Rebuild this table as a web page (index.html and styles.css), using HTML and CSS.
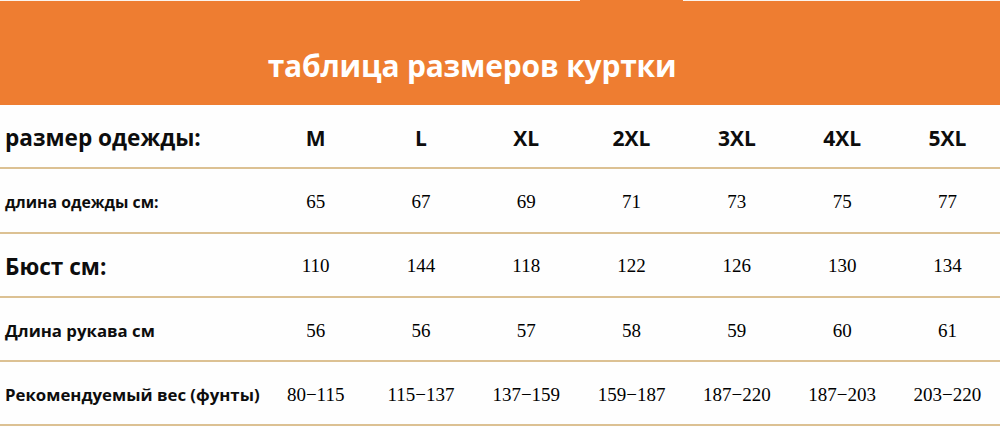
FILE: index.html
```html
<!DOCTYPE html>
<html lang="ru">
<head>
<meta charset="utf-8">
<title>таблица размеров куртки</title>
<link rel="stylesheet" href="styles.css">
</head>
<body>
<div class="page">
  <div class="top-edge"><span class="notch"></span></div>
  <header class="banner">
    <h1 class="title">таблица размеров куртки</h1>
  </header>
  <div class="table">
    <div class="row">
      <div class="label label-lg">размер одежды:</div>
      <div class="cell size">M</div>
      <div class="cell size">L</div>
      <div class="cell size">XL</div>
      <div class="cell size">2XL</div>
      <div class="cell size">3XL</div>
      <div class="cell size">4XL</div>
      <div class="cell size">5XL</div>
    </div>
    <div class="row">
      <div class="label label-sm">длина одежды см:</div>
      <div class="cell num">65</div>
      <div class="cell num">67</div>
      <div class="cell num">69</div>
      <div class="cell num">71</div>
      <div class="cell num">73</div>
      <div class="cell num">75</div>
      <div class="cell num">77</div>
    </div>
    <div class="row">
      <div class="label label-lg">Бюст см:</div>
      <div class="cell num">110</div>
      <div class="cell num">144</div>
      <div class="cell num">118</div>
      <div class="cell num">122</div>
      <div class="cell num">126</div>
      <div class="cell num">130</div>
      <div class="cell num">134</div>
    </div>
    <div class="row">
      <div class="label label-md">Длина рукава см</div>
      <div class="cell num">56</div>
      <div class="cell num">56</div>
      <div class="cell num">57</div>
      <div class="cell num">58</div>
      <div class="cell num">59</div>
      <div class="cell num">60</div>
      <div class="cell num">61</div>
    </div>
    <div class="row">
      <div class="label label-md">Рекомендуемый вес (фунты)</div>
      <div class="cell num">80−115</div>
      <div class="cell num">115−137</div>
      <div class="cell num">137−159</div>
      <div class="cell num">159−187</div>
      <div class="cell num">187−220</div>
      <div class="cell num">187−203</div>
      <div class="cell num">203−220</div>
    </div>
  </div>
</div>
</body>
</html>
```

FILE: styles.css
```css
* { box-sizing: border-box; }
html, body { margin: 0; padding: 0; background: #fefefe; }
.page { width: 1000px; height: 427px; overflow: hidden; background: #fefefe; }
.top-edge { height: 1px; background: #fbf3ec; position: relative; }
.notch { position: absolute; left: 580px; width: 103px; top: 0; height: 1px; background: #ee7d31; }
.banner {
  height: 104px;
  background: #ee7d31;
  display: flex;
  align-items: center;
  justify-content: center;
  padding: 24px 56px 0 0;
}
.title {
  margin: 0;
  color: #fff;
  font-family: "Open Sans", sans-serif;
  font-weight: 700;
  font-size: 30px;
  letter-spacing: -0.2px;
}
.table { display: flex; flex-direction: column; }
.row {
  display: grid;
  grid-template-columns: 263px repeat(7, 105.3px);
  height: 64.3px;
  border-bottom: 2px solid #dcc193;
  align-items: center;
  padding-top: 3px;
}
.label {
  font-family: "Open Sans", sans-serif;
  font-weight: 700;
  color: #0d0d0d;
  padding-left: 5px;
  white-space: nowrap;
}
.label-lg { font-size: 22.6px; }
.label-sm { font-size: 15.8px; }
.label-md { font-size: 16.8px; }
.cell { text-align: center; color: #0d0d0d; }
.size {
  font-family: "Open Sans", sans-serif;
  font-weight: 700;
  font-size: 21px;
}
.num {
  font-family: "Liberation Serif", serif;
  font-size: 19px;
  color: #000;
}
```
